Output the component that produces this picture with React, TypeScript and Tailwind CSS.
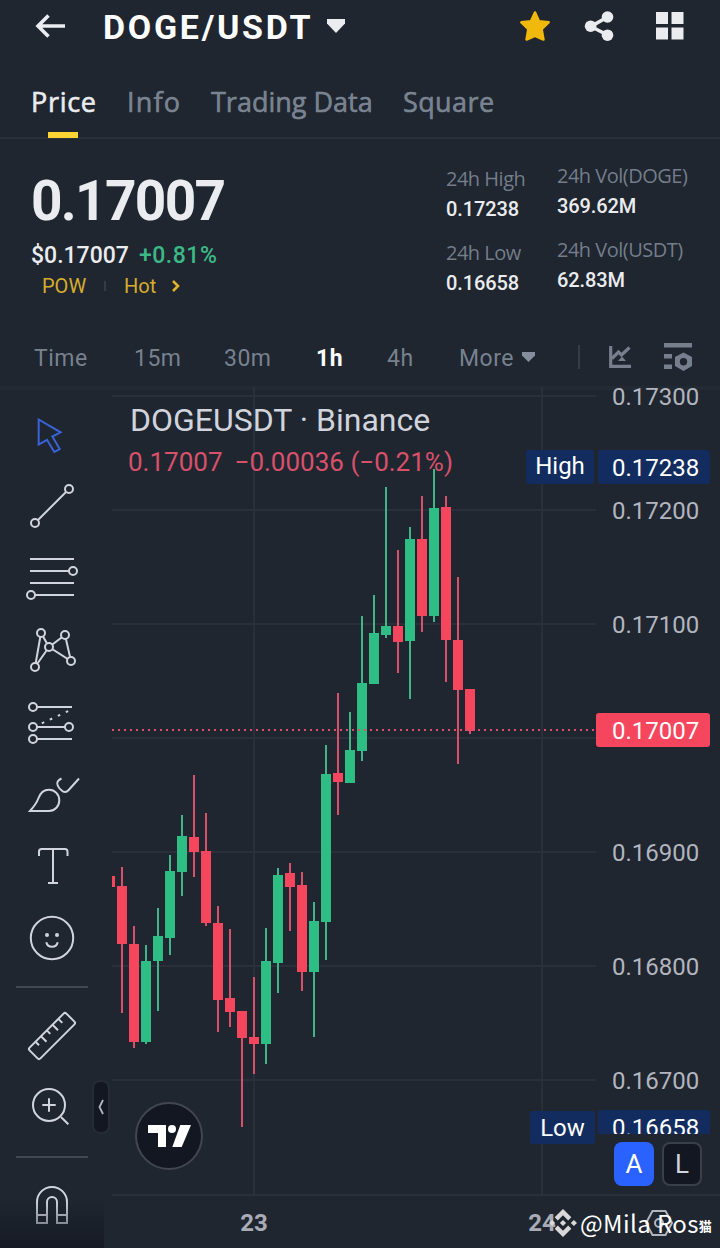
import React from 'react';

type CandleTypes = {
  x: number;
  high: number;
  top: number;
  bottom: number;
  low: number;
  up?: boolean;
};

type ToolTypes = {
  children: React.ReactNode;
  className?: string;
};

type StatTypes = {
  label: string;
  value: string;
};

const candles: CandleTypes[] = [
  { x: 110, high: 876, top: 876, bottom: 887, low: 887 },
  { x: 122, high: 867, top: 886, bottom: 944, low: 1013 },
  { x: 134, high: 926, top: 944, bottom: 1042, low: 1048 },
  { x: 146, high: 945, top: 961, bottom: 1042, low: 1044, up: true },
  { x: 158, high: 908, top: 936, bottom: 961, low: 1011, up: true },
  { x: 170, high: 855, top: 871, bottom: 938, low: 955, up: true },
  { x: 182, high: 815, top: 836, bottom: 872, low: 896, up: true },
  { x: 194, high: 775, top: 837, bottom: 852, low: 877 },
  { x: 206, high: 813, top: 851, bottom: 923, low: 926 },
  { x: 218, high: 906, top: 923, bottom: 1000, low: 1032 },
  { x: 230, high: 929, top: 998, bottom: 1012, low: 1027 },
  { x: 242, high: 1011, top: 1011, bottom: 1038, low: 1127 },
  { x: 254, high: 977, top: 1037, bottom: 1044, low: 1074 },
  { x: 266, high: 928, top: 961, bottom: 1044, low: 1064, up: true },
  { x: 278, high: 868, top: 875, bottom: 963, low: 993, up: true },
  { x: 290, high: 863, top: 873, bottom: 887, low: 931 },
  { x: 302, high: 872, top: 885, bottom: 972, low: 991 },
  { x: 314, high: 902, top: 921, bottom: 972, low: 1037, up: true },
  { x: 326, high: 745, top: 774, bottom: 922, low: 960, up: true },
  { x: 338, high: 693, top: 773, bottom: 782, low: 815 },
  { x: 350, high: 712, top: 750, bottom: 783, low: 783, up: true },
  { x: 362, high: 616, top: 683, bottom: 751, low: 761, up: true },
  { x: 374, high: 595, top: 633, bottom: 684, low: 684, up: true },
  { x: 386, high: 487, top: 626, bottom: 635, low: 638, up: true },
  { x: 398, high: 550, top: 626, bottom: 642, low: 673 },
  { x: 410, high: 527, top: 539, bottom: 641, low: 699, up: true },
  { x: 422, high: 496, top: 539, bottom: 616, low: 632 },
  { x: 434, high: 469, top: 508, bottom: 616, low: 622, up: true },
  { x: 446, high: 496, top: 507, bottom: 640, low: 682 },
  { x: 458, high: 577, top: 640, bottom: 690, low: 764 },
  { x: 470, high: 689, top: 689, bottom: 731, low: 734 },
];

const gridRows = [396, 510, 624, 738, 852, 966, 1080];
const gridCols = [254, 542];

// the blank step sits under the last price badge
const prices = ['0.17300', '0.17200', '0.17100', '', '0.16900', '0.16800', '0.16700'];

const Tool = (props: ToolTypes) => {
  return (
    <button className="flex h-[72px] w-full shrink-0 items-center justify-center">
      <svg
        width="56"
        height="56"
        viewBox="0 0 56 56"
        fill="none"
        strokeWidth="2"
        className={props.className ?? 'stroke-[#d1d4dc]'}
      >
        {props.children}
      </svg>
    </button>
  );
};

const Divider = () => <div className="mx-4 my-3 h-0.5 shrink-0 bg-[#434852]" />;

const Toolbar = () => {
  return (
    <aside className="relative flex w-[104px] shrink-0 flex-col overflow-y-clip pt-3">
      <Tool className="stroke-[#3963d8]">
        <path d="M14.7 13.5 36.6 26.3 28.4 30.5 35.7 43 30.3 46 23 33.8 14.7 38.5Z" />
      </Tool>
      <Tool>
        <path d="M14 42 42 14" />
        <circle cx="45" cy="11" r="4" />
        <circle cx="11" cy="45" r="4" />
      </Tool>
      <Tool>
        <path d="M6 9H50M6 21H45M6 33H50M11 45H50" />
        <circle cx="49" cy="21" r="4" />
        <circle cx="7" cy="45" r="4" />
      </Tool>
      <Tool>
        <path d="M17 11 11 45 25 25ZM25 25 41 13 47 39Z" />
        <g className="fill-[#1f2630]">
          <circle cx="17" cy="11" r="4" />
          <circle cx="41" cy="13" r="4" />
          <circle cx="25" cy="25" r="4" />
          <circle cx="11" cy="45" r="4" />
          <circle cx="47" cy="39" r="4" />
        </g>
      </Tool>
      <Tool>
        <path d="M13 13H48M13 33H41M13 45H48" />
        <path d="M17.8 29.3 20.2 28.2M25.8 25.6 28.2 24.5M33.8 21.9 36.2 20.8M41.8 18.2 44.2 17.1" />
        <circle cx="9" cy="13" r="4" />
        <circle cx="9" cy="33" r="4" />
        <circle cx="45" cy="33" r="4" />
        <circle cx="9" cy="45" r="4" />
      </Tool>
      <Tool>
        <path d="M6 45H25C31 45 35.3 40 35.3 34.3S31 23.7 25 23.7C19 23.7 16.2 27 14.3 32.5C12.5 37.5 10 40.5 6 45Z" />
        <path d="M37.5 12.5C34 14 32.2 16.5 33.7 19.5C34.7 22 36.8 24.2 38.8 25.4C41 26.5 43 26 44.7 24L55 12.5" />
      </Tool>
      <Tool>
        <path d="M15 18V13.5A2.5 2.5 0 0 1 17.5 11H41A2.5 2.5 0 0 1 43.5 13.5V18M29 11V45M24 45H34" />
      </Tool>
      <Tool>
        <circle cx="28" cy="28" r="21.2" />
        <path d="M22.3 32.3C23.5 38.2 32.5 38.2 33.7 32.3" />
        <g className="fill-[#d1d4dc] stroke-none">
          <circle cx="23" cy="25" r="2" />
          <circle cx="33" cy="25" r="2" />
        </g>
      </Tool>
      <Divider />
      <Tool>
        <path d="M39.6 5.6 5.6 39.6A2 2 0 0 0 5.6 42.4L13.6 50.4A2 2 0 0 0 16.4 50.4L50.4 16.4A2 2 0 0 0 50.4 13.6L42.4 5.6A2 2 0 0 0 39.6 5.6Z" />
        <path d="M11.5 33.7 15 37.2M17 28.2 22.5 33.7M22.8 22.4 26.3 25.9M28.5 16.7 34 22.2M34.3 10.9 38.3 14.9" />
      </Tool>
      <Tool>
        <circle cx="25" cy="25" r="16" />
        <path d="M18.3 25H31.7M25 18.3V31.7M37 37 44.3 44.3" />
      </Tool>
      <Divider />
      <Tool>
        <path d="M13 45V24A15 15 0 0 1 43 24V45H33V24A5 5 0 0 0 23 24V45ZM13 37H23M33 37H43" />
      </Tool>
      <div className="absolute inset-x-0 bottom-0 h-12 bg-gradient-to-b from-transparent to-[#131722]/80" />
      <button className="absolute left-[92px] top-[694px] flex h-[54px] w-[18px] items-center justify-center rounded-lg border-2 border-[#262b36] bg-[#131722]">
        <svg width="6" height="16" viewBox="0 0 6 16" fill="none">
          <path d="M5 1 1.5 8 5 15" stroke="#b2b5be" strokeWidth="1.8" />
        </svg>
      </button>
    </aside>
  );
};

const Header = () => {
  return (
    <header className="flex h-[52px] items-center pl-[35px]">
      <svg width="30" height="24" viewBox="0 0 30 24" fill="none" className="shrink-0">
        <path d="M13.5 1.5 3 12 13.5 22.5M3 12H30" stroke="#eaecef" strokeWidth="3.6" />
      </svg>
      <h1 className="ml-[38px] w-[224px] whitespace-nowrap pt-0.5 text-[34px] font-bold tracking-[2.7px] text-white">
        DOGE/USDT
      </h1>
      <svg width="18" height="14" viewBox="0 0 18 14" className="shrink-0">
        <path d="M0 0H18V4.5L9 14 0 4.5Z" fill="#eaecef" />
      </svg>
      <svg width="30" height="30" viewBox="0 0 30 30" className="ml-[175px] shrink-0">
        <path
          d="M15 1.5 19 10.2 28.6 11.4 21.6 18 23.4 28.5 15 24.8 6.6 28.5 8.4 18 1.4 11.4 11 10.2Z"
          fill="#f0b90b"
          stroke="#f0b90b"
          strokeWidth="2.6"
          strokeLinejoin="round"
        />
      </svg>
      <svg width="30" height="30" viewBox="0 0 30 30" className="ml-[34px] shrink-0" fill="#eaecef">
        <path d="M23.5 6 7 15.5 23.5 24" fill="none" stroke="#eaecef" strokeWidth="3.6" />
        <circle cx="23.5" cy="6" r="5.8" />
        <circle cx="6.6" cy="15.2" r="5.8" />
        <circle cx="23.5" cy="24.2" r="5.8" />
      </svg>
      <svg width="28" height="28" viewBox="0 0 28 28" className="ml-[42px] shrink-0" fill="#eaecef">
        <path d="M0 0H12V12H0ZM15.5 0H27.5V12H15.5ZM0 15.5H12V27.5H0ZM15.5 15.5H27.5V27.5H15.5Z" />
      </svg>
    </header>
  );
};

const Tabs = () => {
  return (
    <nav className="flex h-[87px] border-b-2 border-[#2a313b] pl-[31px] pt-8 font-['Open_Sans',sans-serif] text-[27px] leading-[36px] text-[#848e9c]/90 [-webkit-text-stroke:0.6px]">
      <div className="relative w-[96px] tracking-[0.7px] text-[#eaecef]">
        Price
        <span className="absolute left-[17px] top-12 h-1.5 w-[30px] bg-[#fcd535]" />
      </div>
      <span className="w-[84px] tracking-[1.2px]">Info</span>
      <span className="w-[192px] whitespace-nowrap">Trading Data</span>
      <span className="tracking-[0.4px]">Square</span>
    </nav>
  );
};

const Stat = (props: StatTypes) => {
  return (
    <div className="h-[74px] whitespace-nowrap">
      <div className="h-[29px] font-['Open_Sans',sans-serif] text-[20px] leading-[28px] tracking-[-0.5px] text-[#848e9c]/85">
        {props.label}
      </div>
      <div className="text-[20px] font-medium leading-[31px] tracking-[-0.1px] text-[#eaecef]">
        {props.value}
      </div>
    </div>
  );
};

const Quote = () => {
  return (
    <section className="flex h-[190px] pl-[31px]">
      <div className="w-[415px] pt-[29px]">
        <div className="h-[67px] text-[55px] font-bold leading-[66px] tracking-[-1.7px] text-[#eaecef]">
          0.17007
        </div>
        <div className="flex h-[34px] items-center pt-2 text-[23px] font-medium">
          <span className="w-[108px] text-[#eaecef]">$0.17007</span>
          <span className="tracking-[0.5px] text-[#3bb886]">+0.81%</span>
        </div>
        <div className="flex h-[34px] items-center pl-[11px] text-[20px] text-[#d6ac2c]">
          <span className="w-[62px]">POW</span>
          <span className="h-2.5 w-0.5 bg-[#363c47]" />
          <span className="ml-[18px] w-[48px]">Hot</span>
          <svg width="8" height="12" viewBox="0 0 8 12" fill="none">
            <path d="M1 1 6 6 1 11" stroke="#e0b12a" strokeWidth="2.6" />
          </svg>
        </div>
      </div>
      <div className="w-[111px] pt-[26px]">
        <Stat label="24h High" value="0.17238" />
        <Stat label="24h Low" value="0.16658" />
      </div>
      <div className="pt-[23px]">
        <Stat label="24h Vol(DOGE)" value="369.62M" />
        <Stat label="24h Vol(USDT)" value="62.83M" />
      </div>
    </section>
  );
};

const Intervals = () => {
  return (
    <div className="flex h-[57px] items-center pb-0.5 pl-[34px] text-[23px] tracking-[0.5px] text-[#848e9c]/90">
      <div className="flex pt-1.5">
        <span className="w-[100px]">Time</span>
        <span className="w-[90px]">15m</span>
        <span className="w-[92px]">30m</span>
        <span className="w-[71px] font-bold text-white">1h</span>
        <span className="w-[72px]">4h</span>
        <span className="w-[63px]">More</span>
      </div>
      <svg width="13" height="10" viewBox="0 0 13 10" fill="#848e9c">
        <path d="M0 0H13V3.5L6.5 10 0 3.5Z" />
      </svg>
      <span className="ml-[43px] h-6 w-0.5 bg-[#363d48]" />
      <svg width="22" height="22" viewBox="0 0 22 22" fill="none" className="ml-[29px]">
        <path d="M1.7 0V20.3H22M3 12.5 9.5 6 12.5 9 20.5 1.5" stroke="#777f8d" strokeWidth="3.2" />
        <path d="M13 10.5 17 15H9Z" fill="#777f8d" />
      </svg>
      <svg width="28" height="28" viewBox="0 0 28 28" fill="#777f8d" className="ml-[33px]">
        <path d="M0 0H28V4.5H0ZM0 11H8V15.5H0ZM0 21.5H8V26H0Z" />
        <path
          fillRule="evenodd"
          d="M19.5 9.5 28 14V23L19.5 28 11 23V14ZM19.5 15A3.7 3.7 0 1 0 19.5 22.4A3.7 3.7 0 1 0 19.5 15Z"
        />
      </svg>
    </div>
  );
};

const Candles = () => {
  return (
    <svg width="492" height="808" viewBox="104 386 492 808" className="block shrink-0">
      <g fill="#2a303a">
        {gridRows.map((y) => (
          <rect key={y} x="112" y={y - 1} width="484" height="2" />
        ))}
        {gridCols.map((x) => (
          <rect key={x} x={x - 1} y="386" width="2" height="808" />
        ))}
      </g>
      <clipPath id="pane">
        <rect x="112" y="386" width="484" height="808" />
      </clipPath>
      <g clipPath="url(#pane)">
        {candles.map((c) => (
          <g key={c.x}>
            <rect
              x={c.x - 1}
              y={c.high}
              width="2"
              height={c.low - c.high}
              fill={c.up ? '#3fb589' : '#d9506a'}
            />
            <rect
              x={c.x - 5}
              y={c.top}
              width="10"
              height={c.bottom - c.top}
              fill={c.up ? '#2ebd85' : '#f6465d'}
            />
          </g>
        ))}
      </g>
      <path d="M112 730H596" stroke="#d9506a" strokeWidth="2" strokeDasharray="2 4" />
    </svg>
  );
};

const PriceScale = () => {
  return (
    <div className="relative h-[808px] w-[124px] shrink-0 pl-4 text-2xl text-[#b2b5be]">
      <div className="-mt-[46px]">
        {prices.map((price, i) => (
          <div key={i} className="flex h-[114px] items-center">
            {price}
          </div>
        ))}
      </div>
      <div className="absolute left-0.5 top-16 flex h-[34px] w-[112px] items-center rounded-[3px] bg-[#132c60] pl-3.5 pt-0.5 text-white">
        0.17238
      </div>
      <div className="absolute left-0 top-[327px] flex h-[34px] w-[114px] items-center rounded-[3px] bg-[#f6465d] pl-4 pt-0.5 text-white">
        0.17007
      </div>
      <div className="absolute left-0.5 top-[724px] h-[24px] w-[112px] overflow-hidden rounded-t-[3px] bg-[#132c60] pl-3.5 leading-[36px] text-white">
        0.16658
      </div>
      <div className="absolute left-[18px] top-[756px] flex gap-2">
        <button className="h-11 w-10 rounded-lg bg-[#2962ff] text-[26px] text-white">A</button>
        <button className="h-11 w-10 rounded-lg border-2 border-[#3b3f4a] bg-[#131722] text-[26px] text-[#d1d4dc]">
          L
        </button>
      </div>
    </div>
  );
};

const Chart = () => {
  return (
    <section className="relative flex w-[616px] flex-col">
      <div className="flex">
        <Candles />
        <PriceScale />
      </div>
      <div className="ml-2 flex h-[54px] items-center border-t-2 border-[#2a303a] pt-0.5 text-2xl font-bold text-[#a9acb6]">
        <span className="ml-[122px] w-10 text-center">23</span>
        <span className="ml-[248px] w-10 text-center">24</span>
        <svg width="28" height="26" viewBox="0 0 28 26" fill="none" className="ml-[83px]">
          <path d="M7.5 1H20.5L27 13 20.5 25H7.5L1 13Z" stroke="#b2b5be" strokeWidth="2" />
          <circle cx="14" cy="13" r="4" stroke="#b2b5be" strokeWidth="2" />
        </svg>
      </div>
      <div className="absolute left-[26px] top-[14px] whitespace-nowrap text-[32px] leading-[40px] text-[#d1d4dc]">
        DOGEUSDT · Binance
      </div>
      <div className="absolute left-6 top-[60px] flex gap-3 whitespace-nowrap text-[26px] leading-[32px] text-[#d9506a]">
        <span>0.17007</span>
        <span>−0.00036 (−0.21%)</span>
      </div>
      <div className="absolute left-[422px] top-16 flex h-[34px] w-[68px] items-center justify-center rounded-[3px] bg-[#132c60] pb-0.5 text-2xl text-white">
        High
      </div>
      <div className="absolute left-[426px] top-[725px] flex h-[33px] w-[65px] items-center justify-center rounded-[3px] bg-[#132c60] text-2xl text-white">
        Low
      </div>
      <div className="absolute left-[31px] top-[716px] flex h-[68px] w-[68px] items-center justify-center rounded-full border-2 border-[#434651] bg-[#131722]">
        <svg width="43" height="22" viewBox="0 0 43 22" fill="#fff">
          <path d="M0 0H18V22H10V8H0ZM32.3 0H43L33.7 22H24.3Z" />
          <circle cx="24" cy="4" r="4" />
        </svg>
      </div>
      <div className="absolute left-[445px] top-[819px] flex h-9 items-center whitespace-nowrap font-['Noto_Sans_CJK_SC',sans-serif] text-2xl leading-[36px] text-white">
        <svg width="28" height="28" viewBox="0 0 28 28" fill="#d9d9d9">
          <path d="M14 0 22.3 8.3 19.2 11.4 14 6.2 8.8 11.4 5.7 8.3ZM3.1 10.9 6.2 14 3.1 17.1 0 14ZM24.9 10.9 28 14 24.9 17.1 21.8 14ZM14 10.9 17.1 14 14 17.1 10.9 14ZM8.8 16.6 14 21.8 19.2 16.6 22.3 19.7 14 28 5.7 19.7Z" />
        </svg>
        <span className="ml-[3px] tracking-[0.4px]">@Mila Ros</span>
        <span className="mt-1 text-[13px] font-bold leading-none">猫</span>
      </div>
    </section>
  );
};

const App = () => {
  return (
    <div className="h-[1248px] w-[720px] overflow-hidden bg-[#1f2630] font-['Roboto',sans-serif]">
      <Header />
      <Tabs />
      <Quote />
      <Intervals />
      <div className="relative flex h-[862px]">
        <div className="absolute inset-x-0 top-0 h-1 bg-[#242a34]" />
        <Toolbar />
        <Chart />
      </div>
    </div>
  );
};

export default App;
